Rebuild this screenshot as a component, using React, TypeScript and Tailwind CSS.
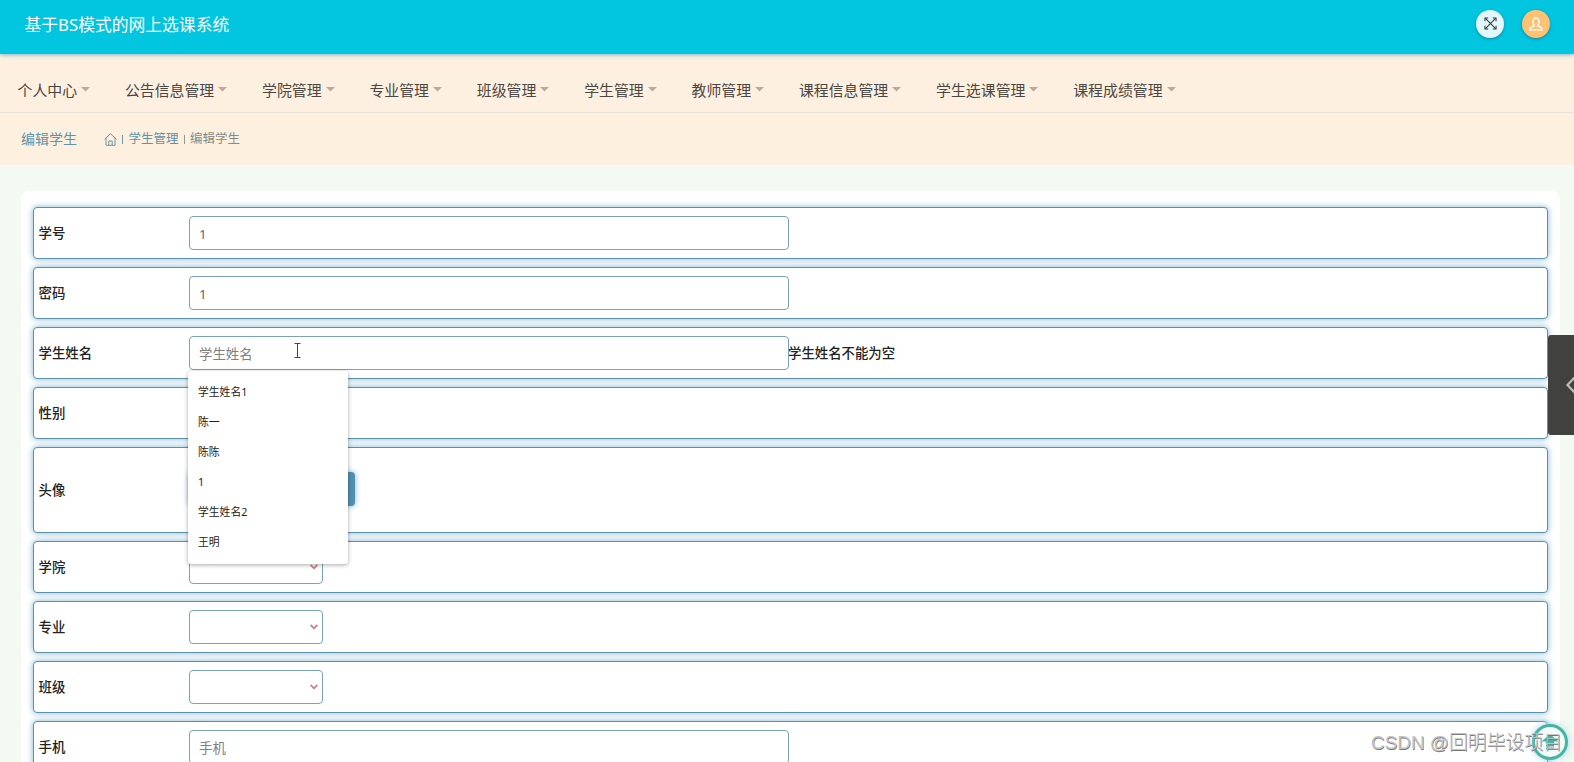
import { ReactNode } from "react";

const menus = [
  "个人中心",
  "公告信息管理",
  "学院管理",
  "专业管理",
  "班级管理",
  "学生管理",
  "教师管理",
  "课程信息管理",
  "学生选课管理",
  "课程成绩管理",
];

const suggestions = ["学生姓名1", "陈一", "陈陈", "1", "学生姓名2", "王明"];

const Row = ({ label, tall, children }: { label: string; tall?: boolean; children?: ReactNode }) => (
  <div
    className={`flex shrink-0 items-center rounded border border-[#5b91ab] bg-white pl-[4.5px] shadow-[0_0_6px_#80b4d0] ${tall ? "h-[86px]" : "h-[52px]"}`}
  >
    <label className="w-[150.5px] shrink-0 pt-px text-[13.4px] font-medium text-[#222]">{label}</label>
    {children}
  </div>
);

const Input = ({ value, placeholder }: { value?: string; placeholder?: string }) => (
  <input
    className="h-[34px] w-[600px] rounded-[4px] border border-[#79a3b7] bg-white px-[9px] pt-px text-[13.4px] text-[#666] outline-none placeholder:text-[#808080]"
    defaultValue={value}
    placeholder={placeholder}
  />
);

const Select = () => (
  <div className="flex h-[34px] w-[134px] items-center justify-end rounded-[4px] border border-[#79a3b7] bg-white pr-1">
    <svg width="8" height="6" viewBox="0 0 8 6" fill="none" stroke="#d07f83" strokeWidth="1.8">
      <path d="M0.7 1 L4 4.3 L7.3 1" />
    </svg>
  </div>
);

const App = () => {
  return (
    <div className="relative h-[762px] w-[1574px] overflow-hidden bg-[#f4f9f2] font-['Noto_Sans','Noto_Sans_CJK_SC',sans-serif]">
      <header className="relative z-10 flex h-[54px] items-start justify-between bg-[#02c5df] pl-[24.5px] pr-6 shadow-[0_1px_4px_#7db8d0]">
        <h1 className="mt-[13px] text-[16.8px] leading-6 text-white">基于BS模式的网上选课系统</h1>
        <div className="mt-[9.5px] flex gap-[18px]">
          <button className="flex size-7 items-center justify-center rounded-full bg-[#e2f8fc] shadow-[0_1px_3px_#16859c]">
            <svg width="13" height="13" viewBox="0 0 14 14" fill="none" stroke="#333" strokeWidth="1.1">
              <path d="M1.5 1.5 L12.5 12.5 M12.5 1.5 L1.5 12.5" />
              <path d="M1 4.5 V1 H4.5 M9.5 1 H13 V4.5 M13 9.5 V13 H9.5 M4.5 13 H1 V9.5" />
            </svg>
          </button>
          <button className="flex size-7 items-center justify-center rounded-full bg-[#ffc273] shadow-[0_1px_3px_#16859c]">
            <svg width="14" height="14" viewBox="0 0 14 14" fill="none" stroke="#fff" strokeWidth="1.3">
              <path d="M5.2 8.1 C3.4 6.6 3.4 1 7 1 C10.6 1 10.6 6.6 8.8 8.1 V9 C10.8 9.5 13.2 10.3 13.3 12.9 H0.7 C0.8 10.3 3.2 9.5 5.2 9 Z" />
            </svg>
          </button>
        </div>
      </header>

      <nav className="flex h-[59px] items-center gap-[34.8px] border-b border-[#e6e2d8] bg-[#fef0e0] pl-[17.5px] pt-[14px] text-[14.9px] text-[#4a4642]">
        {menus.map((name) => (
          <div key={name} className="flex items-center gap-1 whitespace-nowrap">
            {name}
            <svg width="9" height="5" viewBox="0 0 9 5" fill="#b9aa9b">
              <path d="M0 0 H9 L4.5 4.6 Z" />
            </svg>
          </div>
        ))}
      </nav>

      <div className="flex h-[52px] items-center bg-[#fdf0df] pl-[21px] text-[12.5px] text-[#5f93ad]">
        <span className="w-[83px] text-[14px] leading-5">编辑学生</span>
        <svg width="13" height="13" viewBox="0 0 13 13" fill="none" stroke="#6897ac" strokeWidth="1">
          <path d="M0.5 6.2 L6.5 0.8 L12.5 6.2 M2 5 V12.3 H11 V5 M4.8 12 V8 H8.2 V12" />
        </svg>
        <i className="ml-[5px] h-[9px] w-px bg-[#6f98aa]" />
        <span className="ml-[5.5px] pt-px">学生管理</span>
        <i className="ml-[5px] h-[9px] w-px bg-[#8d9a98]" />
        <span className="ml-[5.5px] pt-px text-[#858c86]">编辑学生</span>
      </div>

      <main className="ml-[21px] mt-[26px] flex w-[1539px] flex-col gap-2 rounded-t-lg bg-white pb-5 pl-3 pr-3 pt-4">
        <Row label="学号">
          <Input value="1" />
        </Row>
        <Row label="密码">
          <Input value="1" />
        </Row>
        <Row label="学生姓名">
          <div className="relative">
            <Input placeholder="学生姓名" />
            <ul className="absolute -left-px top-[35px] z-20 h-[193px] w-[160px] rounded-[3px] bg-white pt-[6px] shadow-[0_1px_4px_rgba(0,0,0,0.35)]">
              {suggestions.map((s) => (
                <li key={s} className="h-[30px] pl-[10px] text-[10.8px] leading-[30px] text-[#222]">
                  {s}
                </li>
              ))}
            </ul>
            {/* text cursor */}
            <svg className="absolute left-[105px] top-[7px]" width="7" height="15" viewBox="0 0 7 15" fill="none" stroke="#444" strokeWidth="1">
              <path d="M0.5 0.5 H6.5 M3.5 0.5 V14.5 M0.5 14.5 H6.5" />
            </svg>
          </div>
          <span className="-ml-px pt-px text-[13.4px] font-medium text-[#222]">学生姓名不能为空</span>
        </Row>
        <Row label="性别" />
        <Row label="头像" tall>
          <button className="mb-[3px] h-[34px] w-[166px] rounded-[4px] bg-[#4f90ae] shadow-[0_0_6px_#80b4d0]" />
        </Row>
        <Row label="学院">
          <Select />
        </Row>
        <Row label="专业">
          <Select />
        </Row>
        <Row label="班级">
          <Select />
        </Row>
        <Row label="手机">
          <Input placeholder="手机" />
        </Row>
      </main>

      {/* side drawer handle */}
      <div className="absolute right-0 top-[335px] z-30 flex h-[100px] w-[26px] items-center justify-end overflow-hidden rounded-l-[3px] bg-[#414240]">
        <svg width="8" height="16" viewBox="0 0 8 16" fill="none" stroke="#bbb" strokeWidth="2.2">
          <path d="M8.5 0.5 L1.5 8 L8.5 15.5" />
        </svg>
      </div>

      <div className="absolute left-[1532px] top-[724px] z-30 flex size-9 items-center justify-center rounded-full border-[3px] border-[#43b5a0] bg-[#f3faf9] shadow-[0_0_7px_#a5d2e6]">
        <svg width="18" height="16" viewBox="0 0 18 16" fill="#43b5a0">
          <path d="M9 0 L17.5 7.5 H13 V9.5 H5 V7.5 H0.5 Z M5 10.5 H13 V12.5 H5 Z M5 13.5 H13 V15.5 H5 Z" />
        </svg>
      </div>
      <div className="absolute left-[1371px] top-[729px] z-40 whitespace-nowrap font-['Liberation_Sans','Noto_Sans_CJK_SC',sans-serif] text-[18.9px] font-light leading-7 text-[#c4c4c4] [text-shadow:0.5px_0.5px_0_#777]">
        CSDN @回明毕设项目
      </div>
    </div>
  );
};

export default App;
